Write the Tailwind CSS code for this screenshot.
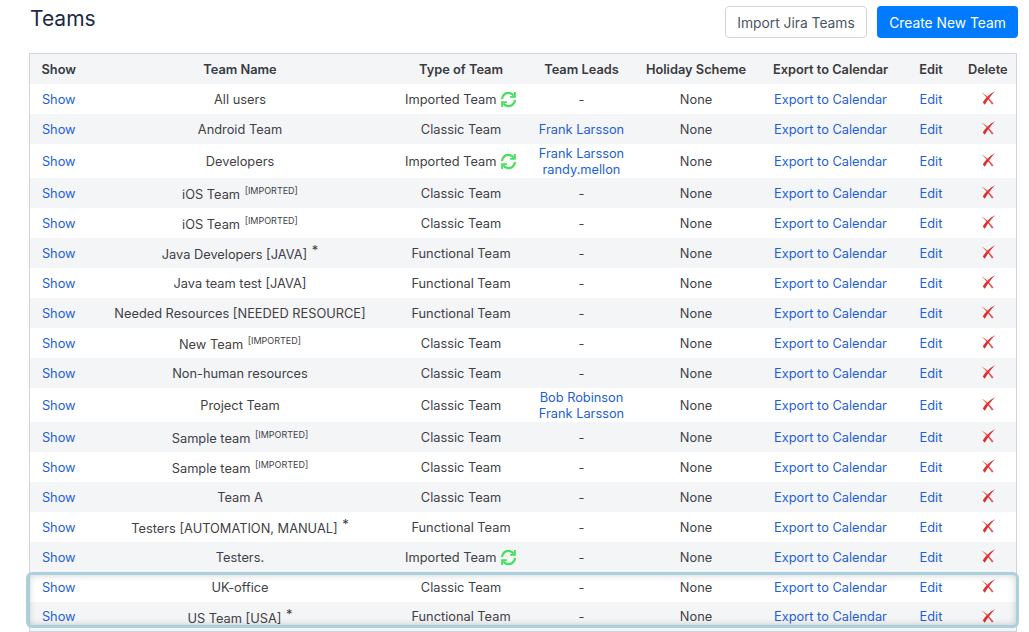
<!DOCTYPE html>
<html lang="en">
<head>
  <meta charset="UTF-8" />
  <title>Teams</title>
  <script src="https://cdn.jsdelivr.net/npm/@tailwindcss/browser@4"></script>
</head>
<body class="relative h-[632px] overflow-hidden bg-white font-['Inter','Liberation_Sans',sans-serif] text-[12.8px] text-[#3f3f46]">
  <!-- Header -->
  <header class="flex items-start justify-between pl-[30px] pr-[11px] pt-[6px] h-[53px]">
    <h1 class="text-[21px] leading-[26px] font-normal text-[#1e2a44]">Teams</h1>
    <div class="flex gap-[10px]">
      <button class="h-[32px] w-[142px] rounded border border-[#d1d5db] bg-white pt-[2px] text-[13.8px] text-[#4b5563]">Import Jira Teams</button>
      <button class="h-[32px] w-[141px] rounded bg-[#007bff] pt-[2px] text-[13.8px] text-white">Create New Team</button>
    </div>
  </header>

  <!-- Teams table -->
  <table class="ml-[29px] w-[988px] table-fixed border-collapse border border-[#d1d5db] text-center">
    <colgroup>
      <col class="w-[58px]" /><col class="w-[305px]" /><col class="w-[137px]" /><col class="w-[104px]" />
      <col class="w-[125px]" /><col class="w-[144px]" /><col class="w-[57px]" /><col />
    </colgroup>
    <thead>
      <tr class="h-[30px] bg-[#f4f5f7] text-[#3a3a3f]">
        <th class="pt-[2px] font-semibold">Show</th><th class="pt-[2px] font-semibold">Team Name</th><th class="pt-[2px] font-semibold">Type of Team</th><th class="pt-[2px] font-semibold">Team Leads</th>
        <th class="pt-[2px] font-semibold">Holiday Scheme</th><th class="pt-[2px] font-semibold">Export to Calendar</th><th class="pt-[2px] font-semibold">Edit</th><th class="pt-[2px] font-semibold">Delete</th>
      </tr>
    </thead>
    <tbody id="rows"></tbody>
  </table>

  <!-- Highlight over the last two rows -->
  <div class="absolute left-[26px] top-[572px] h-[56px] w-[993px] rounded-[6px] border-[3px] border-[#a9d0dc] shadow-[inset_0_0_7px_rgba(0,0,0,0.2)]"></div>

<script>
const SYNC='<svg class="inline-block align-[-4px]" width="17" height="17" viewBox="0 0 16 16" fill="none" stroke="#4ade60" stroke-width="2.200"><path d="M1.800 7.500C2.100 3.500 6 1 9.500 2c1.400.4 2.500 1.200 3.300 2.400"/><path d="M14 1v4.500H9.500" stroke-width="1.800"/><path d="M14.200 8.500c-.3 4-4.200 6.500-7.700 5.500-1.400-.4-2.500-1.200-3.300-2.400"/><path d="M2 15v-4.500h4.500" stroke-width="1.800"/></svg>';
const X='<svg class="relative top-[-2px] inline-block" width="14" height="14" viewBox="0 0 14 14"><path d="M.5 1.500C4 3 9 7.500 12.500 12.500L11 13.500C8 9 4 4.500.5 1.500Z" fill="#e8524f"/><path d="M14 .3C9.500 2.500 4.500 7 1.800 11.500L3.800 13.800C6 9.500 10 4.500 14 .3Z" fill="#dc2f2f"/></svg>';
const link=t=>`<a class="text-[#1d5fd6]">${t}</a>`;
const IMP='<sup class="top-[0px] ml-[1px] text-[9px] align-super leading-none">[IMPORTED]</sup>';
const STAR='<sup class="top-[1px] ml-[1px] text-[13px] align-super leading-none">*</sup>';
const C='Classic Team', F='Functional Team', I='Imported Team '+SYNC;
const FL=link('Frank Larsson');
const TEAMS=[
  ['All users',I,'-'],
  ['Android Team',C,FL],
  ['Developers',I,FL+'<br>'+link('randy.mellon')],
  ['iOS Team '+IMP,C,'-'],
  ['iOS Team '+IMP,C,'-'],
  ['Java Developers [JAVA] '+STAR,F,'-'],
  ['Java team test [JAVA]',F,'-'],
  ['Needed Resources [NEEDED RESOURCE]',F,'-'],
  ['New Team '+IMP,C,'-'],
  ['Non-human resources',C,'-'],
  ['Project Team',C,link('Bob Robinson')+'<br>'+FL],
  ['Sample team '+IMP,C,'-'],
  ['Sample team '+IMP,C,'-'],
  ['Team A',C,'-'],
  ['Testers [AUTOMATION, MANUAL] '+STAR,F,'-'],
  ['Testers.',I,'-'],
  ['UK-office',C,'-'],
  ['US Team [USA] '+STAR,F,'-'],
];
document.getElementById('rows').innerHTML=TEAMS.map(([name,type,leads],i)=>`
  <tr class="${i%2?'bg-[#f4f5f7]':'bg-white'} ${leads.includes('<br>')?'h-[34px]':'h-[30px]'}">
    <td class="pt-[2px] leading-[16px]">${link('Show')}</td>
    <td class="${name.includes('[IMPORTED]')?'pt-[4px]':'pt-[2px]'} leading-[16px]">${name}</td>
    <td class="pt-[2px] leading-[16px]">${type}</td>
    <td class="pt-[2px] leading-[16px]">${leads}</td>
    <td class="pt-[2px] leading-[16px]">None</td>
    <td class="pt-[2px] leading-[16px]">${link('Export to Calendar')}</td>
    <td class="pt-[2px] leading-[16px]">${link('Edit')}</td>
    <td class="pt-[2px] leading-[16px]">${X}</td>
  </tr>`).join('');
</script>
</body>
</html>
